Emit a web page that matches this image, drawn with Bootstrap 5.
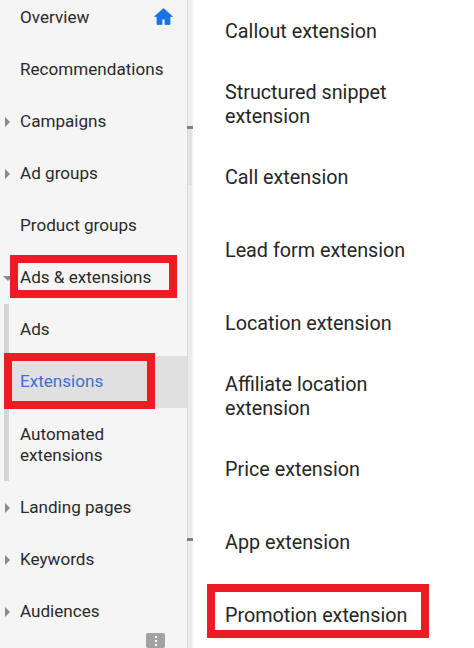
<!doctype html>
<html lang="en"><head><meta charset="utf-8"><title>Extensions</title>
<link href="https://cdn.jsdelivr.net/npm/bootstrap@5.3.0/dist/css/bootstrap.min.css" rel="stylesheet">
<style>
html,body{height:648px;overflow:hidden;background:#fff}
body{font-family:Roboto,"Liberation Sans",sans-serif;color:#212121}
.shell{height:648px;position:relative}
.side{width:187px;background:#f5f5f5;flex:none;margin-top:-8.500px;height:657px}
.gut{width:6px;flex:none;background:linear-gradient(#efefef 128px,#e2e2e2 128px,#e2e2e2 185px,#ececec 185px);border-left:1px solid #dadada;border-right:1px solid #f2f2f2;position:relative}
.gut i{position:absolute;left:-1px;width:6px;height:3px;background:#808080}
.rowi{height:52px;padding-left:20px;font-size:17.100px;line-height:21px;position:relative;display:flex;align-items:center;color:#2a2a2a}
.rowi.tall{height:74px}
.rowi.sel{background:#e0e0e0;color:#3f6fd0;margin-left:10px;padding-left:10px}
.tri{position:absolute;left:5px;top:50%;margin-top:-5px;width:0;height:0;border-left:5px solid #8a8a8a;border-top:5px solid transparent;border-bottom:5px solid transparent}
.tri.open{left:3px;margin-top:-2px;border-top:5px solid #8a8a8a;border-bottom:0;border-left:5px solid transparent;border-right:5px solid transparent}
.home{position:absolute;left:154px;top:16.500px}
.subwrap{position:relative}
.bar{position:absolute;left:4px;top:0;width:5px;height:177px;background:#d4d4d4}
.mainp{padding-left:32px;flex:1;font-size:19.750px;line-height:24px;color:#262626;margin-top:-5px}
.ext{height:73px;display:flex;align-items:center}
.redbox{position:absolute;border:8px solid #ed1c24}
.r1{left:10px;top:255px;width:167px;height:43px}
.r2{left:4px;top:353px;width:151px;height:56px}
.r3{left:207px;top:584px;width:222px;height:54px}
.more{position:absolute;left:146px;top:633px;width:19px;height:15px;background:#a3a3a3;border-radius:2px;display:flex;flex-direction:column;align-items:center;gap:2px;padding-top:3px}
.more b{width:2px;height:2px;background:#fff;display:block}
</style></head>
<body>
<div class="shell d-flex">
  <nav class="side">
    <div class="rowi">Overview
      <svg class="home" width="19" height="17" viewBox="0 0 19 17"><path fill="#1a73e8" stroke="#1a73e8" stroke-width="0.800" stroke-linejoin="round" d="M9.500 0.500 0.500 8.500h2.500v8h5v-5.500h3v5.500h5v-8h2.500z"/></svg>
    </div>
    <div class="rowi">Recommendations</div>
    <div class="rowi"><span class="tri"></span>Campaigns</div>
    <div class="rowi"><span class="tri"></span>Ad groups</div>
    <div class="rowi">Product groups</div>
    <div class="rowi"><span class="tri open"></span>Ads &amp; extensions</div>
    <div class="subwrap">
      <span class="bar"></span>
      <div class="rowi">Ads</div>
      <div class="rowi sel">Extensions</div>
      <div class="rowi tall">Automated<br>extensions</div>
    </div>
    <div class="rowi"><span class="tri"></span>Landing pages</div>
    <div class="rowi"><span class="tri"></span>Keywords</div>
    <div class="rowi"><span class="tri"></span>Audiences</div>
  </nav>
  <div class="gut"><i style="top:126px"></i><i style="top:538px"></i></div>
  <main class="mainp">
    <div class="ext">Callout extension</div>
    <div class="ext">Structured snippet<br>extension</div>
    <div class="ext">Call extension</div>
    <div class="ext">Lead form extension</div>
    <div class="ext">Location extension</div>
    <div class="ext">Affiliate location<br>extension</div>
    <div class="ext">Price extension</div>
    <div class="ext">App extension</div>
    <div class="ext">Promotion extension</div>
  </main>
  <div class="redbox r1"></div>
  <div class="redbox r2"></div>
  <div class="redbox r3"></div>
  <div class="more"><b></b><b></b><b></b></div>
</div>
<script src="https://cdn.jsdelivr.net/npm/bootstrap@5.3.0/dist/js/bootstrap.bundle.min.js"></script>
</body></html>
